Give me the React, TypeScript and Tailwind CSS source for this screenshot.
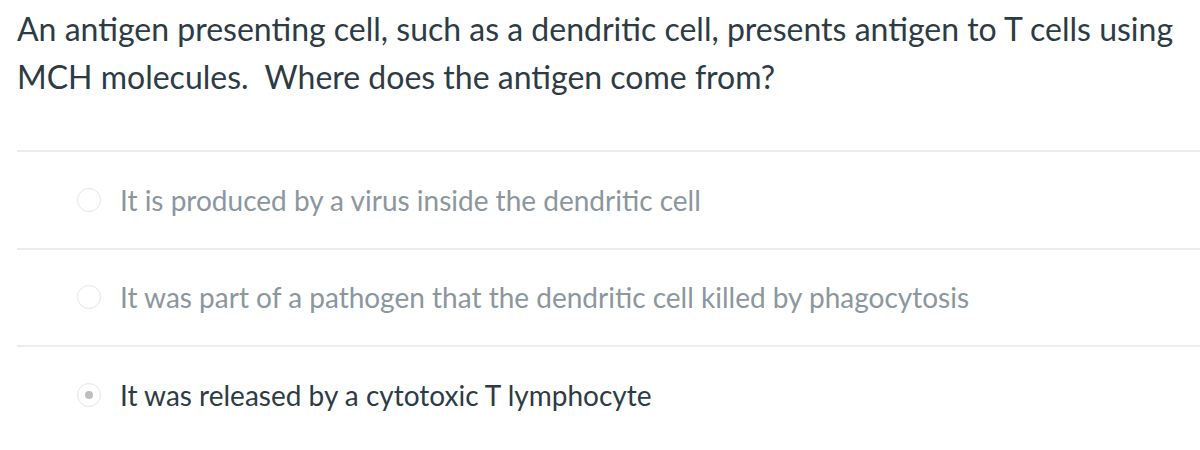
const options = [
  { text: "It is produced by a virus inside the dendritic cell", selected: false },
  { text: "It was part of a pathogen that the dendritic cell killed by phagocytosis", selected: false },
  { text: "It was released by a cytotoxic T lymphocyte", selected: true },
];

export default function App() {
  return (
    <div className="h-[450px] w-[1200px] bg-white pl-[17px] font-['Lato','Liberation_Sans',sans-serif]">
      <p className="pt-[5px] text-[32px] leading-[48px] text-[#2d3b45]">
        An antigen presenting cell, such as a dendritic cell, presents antigen to T cells using MCH molecules.&nbsp; Where
        does the antigen come from?
      </p>
      <div className="mt-[49px]">
        {options.map((o) => (
          <div key={o.text} className="flex h-[97.5px] items-center border-t-2 border-[#ececec] pl-[60px]">
            <span className="flex h-[24px] w-[24px] shrink-0 items-center justify-center rounded-full border border-[#e6e6e6] bg-white">
              {o.selected && <span className="h-[8px] w-[8px] rounded-full bg-[#bdbdbd]" />}
            </span>
            <span
              className={
                "ml-[19px] text-[28px] " + (o.selected ? "text-[#2d3b45]" : "text-[#8b969e]")
              }
            >
              {o.text}
            </span>
          </div>
        ))}
      </div>
    </div>
  );
}
